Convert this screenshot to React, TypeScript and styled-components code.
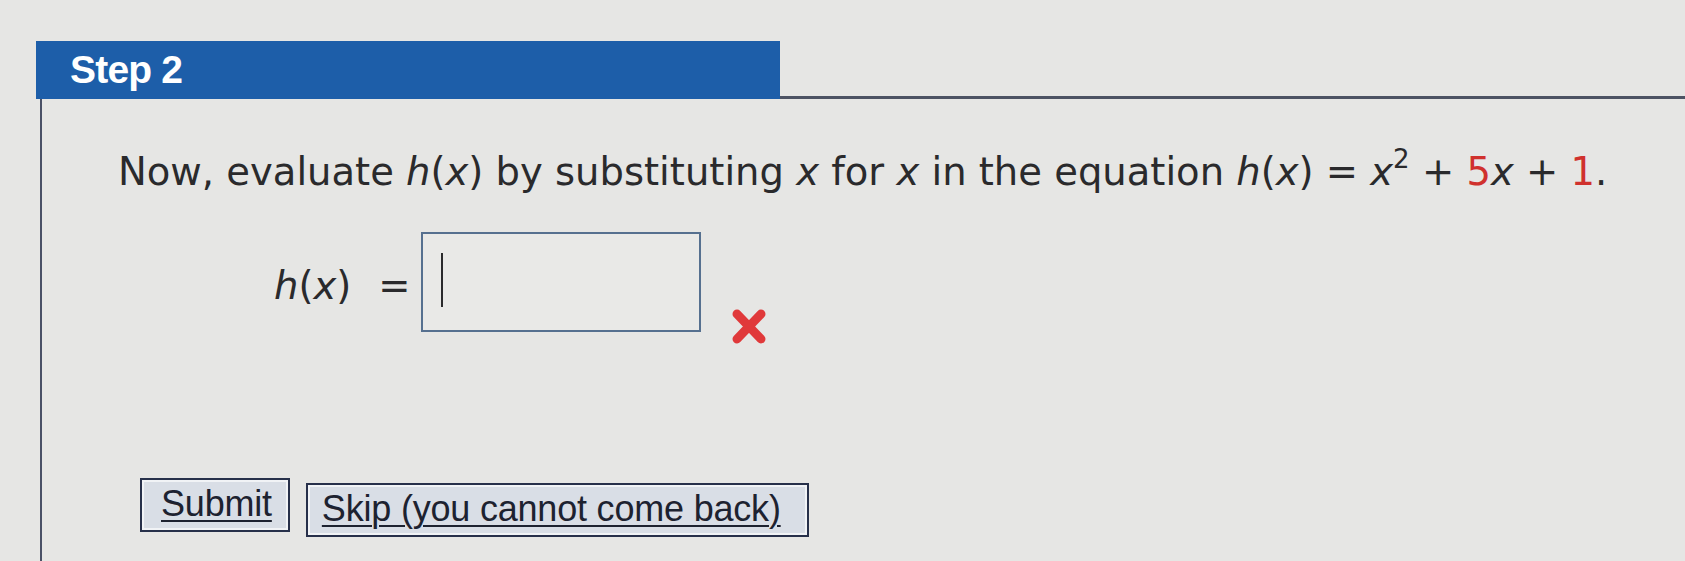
import styled, { createGlobalStyle } from "styled-components";

const GlobalStyle = createGlobalStyle`
  html, body {
    margin: 0;
    padding: 0;
    background: #e6e6e4;
    overflow: hidden;
  }
  * {
    box-sizing: border-box;
  }
`;

// Layout
const Page = styled.div`
  height: 561px;
  padding: 41px 0 0 36px;
  display: flex;
  flex-direction: column;
`;

const Header = styled.div`
  display: flex;
  height: 58px;
`;

const Tab = styled.div`
  width: 744px;
  background: #1d5ea9;
  display: flex;
  align-items: center;
  padding-left: 34px;
  color: #ffffff;
  font-family: "Liberation Sans", Arial, sans-serif;
  font-weight: bold;
  font-size: 39px;
  letter-spacing: -0.8px;
`;

const Rule = styled.div`
  flex: 1;
  align-self: flex-end;
  border-bottom: 3px solid #4d5363;
`;

const Panel = styled.div`
  flex: 1;
  margin-left: 4px;
  border-left: 2px solid #4a5166;
  padding: 51px 0 0 76px;
  font-family: "DejaVu Sans", Verdana, sans-serif;
  font-size: 38.5px;
  line-height: 44px;
  color: #2a2a2c;
`;

const Prompt = styled.div`
  white-space: nowrap;
`;

const Var = styled.i`
  font-style: italic;
`;

const Red = styled.span`
  color: #d0312d;
`;

const Sup = styled.sup`
  font-size: 26px;
  line-height: 0;
  vertical-align: 17px;
`;

const EquationRow = styled.div`
  display: flex;
  align-items: flex-start;
  margin: 38px 0 0 156px;
`;

const Label = styled.span`
  margin-top: 32px;
  white-space: nowrap;
`;

const Equals = styled.span`
  margin: 32px 10px 0 27px;
`;

const AnswerBox = styled.div`
  width: 280px;
  height: 100px;
  border: 2px solid #56708f;
  background: #e9e9e7;
  padding: 19px 0 0 18px;
`;

const Caret = styled.div`
  width: 2px;
  height: 54px;
  background: #2a2a2c;
`;

const WrongMark = styled.svg`
  margin: 76px 0 0 30px;
  width: 36px;
  height: 37px;
`;

const ButtonRow = styled.div`
  display: flex;
  align-items: flex-start;
  gap: 16px;
  margin: 133px 0 0 22px;
`;

const Button = styled.button<{ $padLeft: number; $padRight: number; $drop?: number }>`
  height: 54px;
  margin-top: ${(p) => p.$drop ?? 0}px;
  padding: 4px ${(p) => p.$padRight}px 6px ${(p) => p.$padLeft}px;
  border: 2px solid #27304a;
  box-shadow: inset 0 0 0 2px #f1f3f6;
  background: #d9dee6;
  color: #1d2230;
  font-family: "Liberation Sans", Arial, sans-serif;
  font-size: 36px;
  line-height: 40px;
  letter-spacing: -0.2px;
  text-decoration: underline;
  text-decoration-thickness: 2px;
  text-underline-offset: 4px;
  white-space: nowrap;
  cursor: pointer;
`;

export default function App() {
  return (
    <>
      <GlobalStyle />
      <Page>
        <Header>
          <Tab>Step 2</Tab>
          <Rule />
        </Header>
        <Panel>
          <Prompt>
            Now, evaluate <Var>h</Var>(<Var>x</Var>) by substituting{" "}
            <Var>x</Var> for <Var>x</Var> in the equation <Var>h</Var>(
            <Var>x</Var>) = <Var>x</Var>
            <Sup>2</Sup> + <Red>5</Red>
            <Var>x</Var> + <Red>1</Red>.
          </Prompt>
          <EquationRow>
            <Label>
              <Var>h</Var>(<Var>x</Var>)
            </Label>
            <Equals>=</Equals>
            <AnswerBox>
              <Caret />
            </AnswerBox>
            <WrongMark viewBox="0 0 36 37">
              <path
                d="M6 6 L30 31 M30 6 L6 31"
                stroke="#e0393a"
                strokeWidth="9"
                strokeLinecap="round"
                fill="none"
              />
            </WrongMark>
          </EquationRow>
          <ButtonRow>
            <Button $padLeft={19} $padRight={16}>
              Submit
            </Button>
            <Button $padLeft={14} $padRight={26} $drop={5}>
              Skip (you cannot come back)
            </Button>
          </ButtonRow>
        </Panel>
      </Page>
    </>
  );
}
